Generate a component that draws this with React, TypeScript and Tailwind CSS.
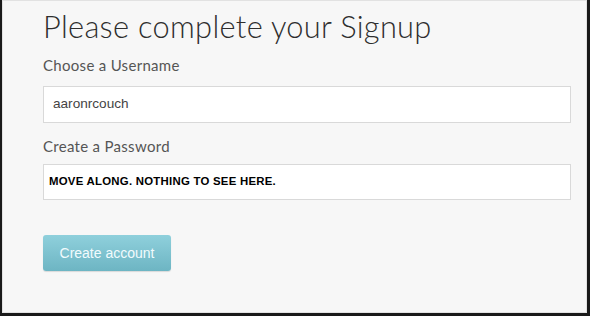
export default function App() {
  return (
    <div className="w-[590px] h-[316px] bg-[#1a1a1a] pl-[2px] pr-[3px] pb-[3px] overflow-hidden">
      <div className="h-full bg-[#f7f7f7] border border-[#e2e2e2] pl-[40px] pr-[15px] flex flex-col">
        <h1 className="mt-[7px] text-[30.8px] leading-[38px] font-light text-[#2e2e2e] font-['Lato','Open_Sans',sans-serif] tracking-[0.3px]">
          Please complete your Signup
        </h1>
        <label className="mt-[9px] text-[15px] leading-[20px] text-[#555] font-['Lato','Open_Sans',sans-serif] tracking-[0.3px]">
          Choose a Username
        </label>
        <div className="mt-[11px] h-[37px] bg-white border border-[#d9d9d9] flex items-center pl-[9px]">
          <span className="text-[13.6px] text-[#444] font-['Liberation_Sans',Arial,sans-serif]">aaronrcouch</span>
        </div>
        <label className="mt-[13px] text-[15px] leading-[20px] text-[#555] font-['Lato','Open_Sans',sans-serif] tracking-[0.3px]">
          Create a Password
        </label>
        <div className="mt-[8px] h-[36px] bg-white border border-[#d9d9d9] flex items-center pl-[5px]">
          <span className="text-[11.4px] font-black text-black font-['Liberation_Sans',Arial,sans-serif] tracking-[0.25px]">
            MOVE ALONG. NOTHING TO SEE HERE.
          </span>
        </div>
        <div className="mt-[35px]">
          <button className="w-[128px] h-[36px] rounded-[3px] bg-gradient-to-b from-[#8fd0dc] to-[#6db5c3] text-[#f2fbfd] text-[14px] font-['Liberation_Sans',Arial,sans-serif] shadow-[0_1px_1px_rgba(0,0,0,0.12)]">
            Create account
          </button>
        </div>
      </div>
    </div>
  );
}
